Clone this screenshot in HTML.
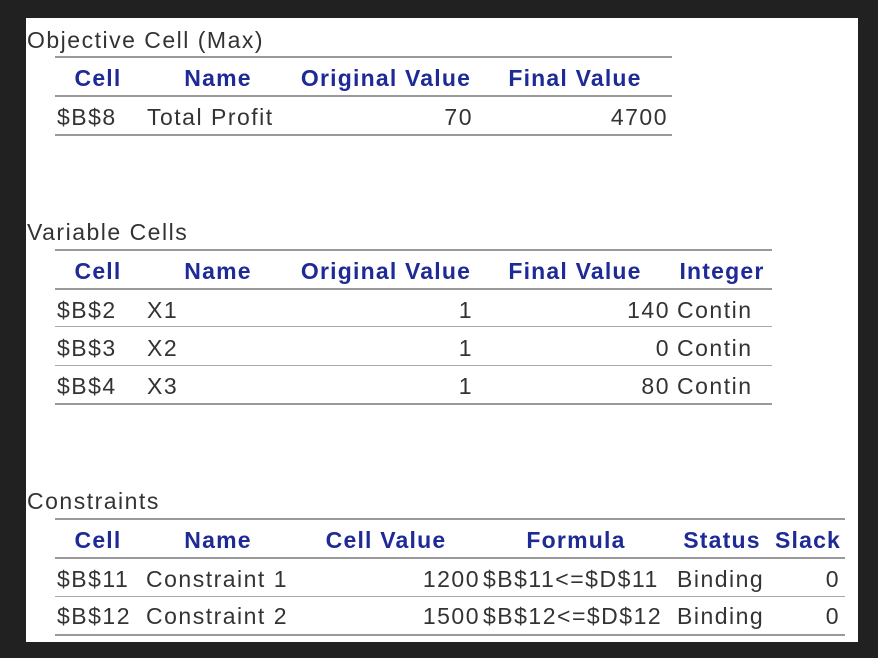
<!DOCTYPE html>
<html><head><style>
body{margin:0;width:878px;height:658px;background:#212121;position:relative;overflow:hidden;font-family:"Liberation Sans",Arial,sans-serif;}
#w{position:absolute;left:26px;top:18px;width:832px;height:624px;background:#fff;}
.t{position:absolute;font-size:23px;color:#333;white-space:nowrap;line-height:24px;letter-spacing:1.5px;}
.h{position:absolute;font-size:23px;color:#1e2a96;font-weight:bold;white-space:nowrap;line-height:24px;transform:translateX(-50%);letter-spacing:1.2px;}
.r{transform:translateX(-100%);letter-spacing:1.5px;}
.l{position:absolute;height:2px;background:#a8a8a8;}
.ld{position:absolute;height:2px;background:#999;}
</style></head><body>
<div id="w"></div>
<!-- Objective -->
<div class="t" style="left:27px;top:28px">Objective Cell (Max)</div>
<div class="ld" style="left:55px;top:56px;width:617px"></div>
<div class="h" style="left:98px;top:66px">Cell</div>
<div class="h" style="left:218px;top:66px">Name</div>
<div class="h" style="left:386px;top:66px">Original Value</div>
<div class="h" style="left:575px;top:66px">Final Value</div>
<div class="ld" style="left:55px;top:95px;width:617px"></div>
<div class="t" style="left:57px;top:105px">$B$8</div>
<div class="t" style="left:147px;top:105px">Total Profit</div>
<div class="t r" style="left:473px;top:105px">70</div>
<div class="t r" style="left:668px;top:105px">4700</div>
<div class="ld" style="left:55px;top:134px;width:617px"></div>
<!-- Variable -->
<div class="t" style="left:27px;top:220px">Variable Cells</div>
<div class="ld" style="left:55px;top:249px;width:717px"></div>
<div class="h" style="left:98px;top:259px">Cell</div>
<div class="h" style="left:218px;top:259px">Name</div>
<div class="h" style="left:386px;top:259px">Original Value</div>
<div class="h" style="left:575px;top:259px">Final Value</div>
<div class="h" style="left:722px;top:259px">Integer</div>
<div class="ld" style="left:55px;top:288px;width:717px"></div>
<div class="t" style="left:57px;top:298px">$B$2</div><div class="t" style="left:147px;top:298px">X1</div>
<div class="t r" style="left:473px;top:298px">1</div><div class="t r" style="left:670px;top:298px">140</div><div class="t" style="left:677px;top:298px">Contin</div>
<div class="l" style="left:55px;top:326px;width:717px;height:1px"></div>
<div class="t" style="left:57px;top:336px">$B$3</div><div class="t" style="left:147px;top:336px">X2</div>
<div class="t r" style="left:473px;top:336px">1</div><div class="t r" style="left:670px;top:336px">0</div><div class="t" style="left:677px;top:336px">Contin</div>
<div class="l" style="left:55px;top:365px;width:717px;height:1px"></div>
<div class="t" style="left:57px;top:374px">$B$4</div><div class="t" style="left:147px;top:374px">X3</div>
<div class="t r" style="left:473px;top:374px">1</div><div class="t r" style="left:670px;top:374px">80</div><div class="t" style="left:677px;top:374px">Contin</div>
<div class="ld" style="left:55px;top:403px;width:717px"></div>
<!-- Constraints -->
<div class="t" style="left:27px;top:489px">Constraints</div>
<div class="ld" style="left:55px;top:518px;width:790px"></div>
<div class="h" style="left:98px;top:528px">Cell</div>
<div class="h" style="left:218px;top:528px">Name</div>
<div class="h" style="left:386px;top:528px">Cell Value</div>
<div class="h" style="left:576px;top:528px">Formula</div>
<div class="h" style="left:722px;top:528px">Status</div>
<div class="h" style="left:808px;top:528px">Slack</div>
<div class="ld" style="left:55px;top:557px;width:790px"></div>
<div class="t" style="left:57px;top:567px">$B$11</div><div class="t" style="left:146px;top:567px">Constraint 1</div>
<div class="t r" style="left:480px;top:567px">1200</div><div class="t" style="left:483px;top:567px">$B$11&lt;=$D$11</div><div class="t" style="left:677px;top:567px">Binding</div><div class="t r" style="left:840px;top:567px">0</div>
<div class="l" style="left:55px;top:596px;width:790px;height:1px"></div>
<div class="t" style="left:57px;top:604px">$B$12</div><div class="t" style="left:146px;top:604px">Constraint 2</div>
<div class="t r" style="left:480px;top:604px">1500</div><div class="t" style="left:483px;top:604px">$B$12&lt;=$D$12</div><div class="t" style="left:677px;top:604px">Binding</div><div class="t r" style="left:840px;top:604px">0</div>
<div class="ld" style="left:55px;top:634px;width:790px"></div>
</body></html>
